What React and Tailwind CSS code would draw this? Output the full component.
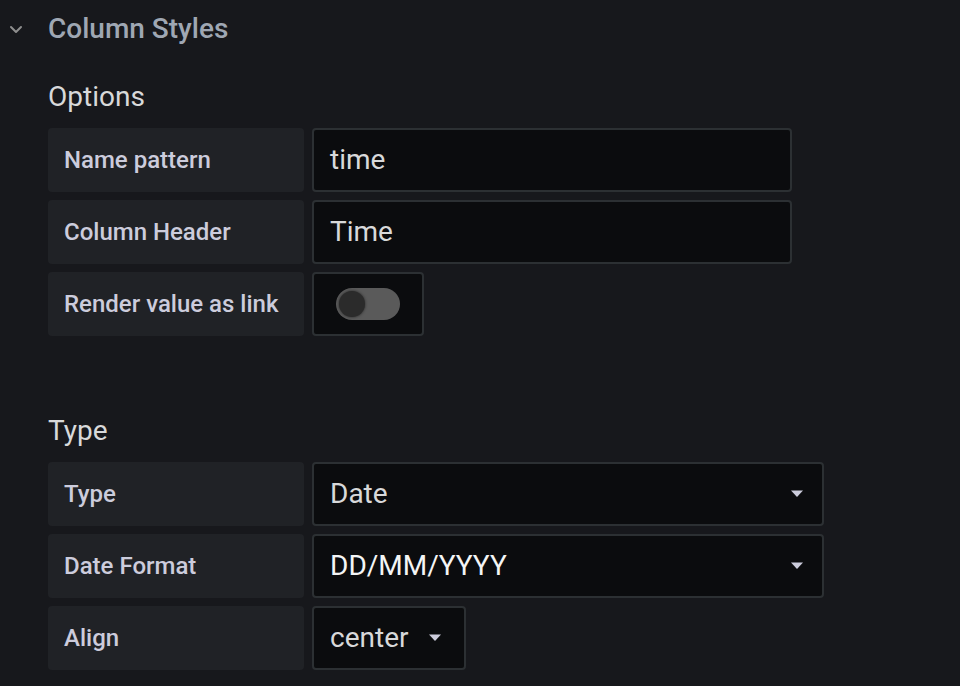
import React from "react";

const Caret = () => (
  <svg width="14" height="8" viewBox="0 0 14 8" className="shrink-0">
    <path d="M1 0.5 L13 0.5 L7 7 Z" fill="#ccccdc" />
  </svg>
);

const Label = ({ children }) => (
  <div className="w-[256px] h-[64px] shrink-0 rounded-[4px] bg-[#202226] flex items-center px-4 text-[24px] font-medium text-[#ccccdc]">
    {children}
  </div>
);

const Input = ({ value, w }) => (
  <div className={`${w} h-[64px] rounded-[4px] border-2 border-[#2c3033] bg-[#0b0c0e] flex items-center px-4 text-[28px] text-[#d8d9da]`}>
    {value}
  </div>
);

const Select = ({ value, w, tight, bright }) => (
  <div className={`${w} h-[64px] rounded-[4px] border-2 border-[#2c3033] bg-[#0b0c0e] flex items-center pl-4 ${tight ? "pr-5 gap-5" : "pr-[18px] justify-between"} text-[28px] ${bright ? "text-[#f4f5f5]" : "text-[#d8d9da]"}`}>
    <span>{value}</span>
    <Caret />
  </div>
);

export default function App() {
  return (
    <div className="w-[960px] h-[686px] bg-[#17181c] overflow-hidden" style={{ fontFamily: "Roboto, 'Liberation Sans', sans-serif" }}>
      <div className="flex items-center h-[56px] pt-[2px]">
        <svg width="48" height="56" viewBox="0 0 48 56" className="shrink-0">
          <path d="M11 26 L16 31 L21 26" stroke="#8e8e8e" strokeWidth="2" fill="none" strokeLinecap="round" strokeLinejoin="round" />
        </svg>
        <span className="text-[28px] font-medium text-[#9fa7b3]">Column Styles</span>
      </div>
      <div className="pl-12">
        <div className="text-[28px] text-[#d8d9da] pt-[20px] h-[72px]">Options</div>
        <div className="flex flex-col gap-2">
          <div className="flex gap-2">
            <Label>Name pattern</Label>
            <Input value="time" w="w-[480px]" />
          </div>
          <div className="flex gap-2">
            <Label>Column Header</Label>
            <Input value="Time" w="w-[480px]" />
          </div>
          <div className="flex gap-2">
            <Label>Render value as link</Label>
            <div className="w-[112px] h-[64px] rounded-[4px] border-2 border-[#2c3033] bg-[#0b0c0e] flex items-center pl-[22px]">
              <div className="w-[64px] h-[32px] rounded-full bg-[#5a5a5a] flex items-center pl-[3px]">
                <div className="w-[26px] h-[26px] rounded-full bg-[#2b2b2b] shadow-[0_0_3px_rgba(0,0,0,0.6)]" />
              </div>
            </div>
          </div>
        </div>
        <div className="text-[28px] text-[#d8d9da] pt-[74px] h-[126px]">Type</div>
        <div className="flex flex-col gap-2">
          <div className="flex gap-2">
            <Label>Type</Label>
            <Select value="Date" w="w-[512px]" />
          </div>
          <div className="flex gap-2">
            <Label>Date Format</Label>
            <Select value="DD/MM/YYYY" w="w-[512px]" bright />
          </div>
          <div className="flex gap-2">
            <Label>Align</Label>
            <Select value="center" w="w-[154px]" tight />
          </div>
        </div>
      </div>
    </div>
  );
}
